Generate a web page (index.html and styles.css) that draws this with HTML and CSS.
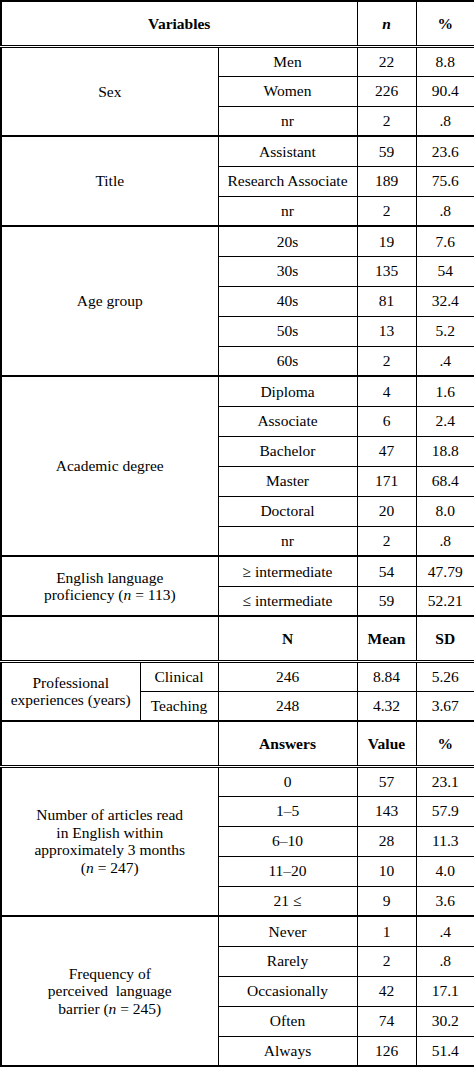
FILE: index.html
```html
<!DOCTYPE html>
<html lang="en">
<head>
<meta charset="utf-8">
<title>Participant characteristics</title>
<link rel="stylesheet" href="styles.css">
</head>
<body>
<table class="stats">
  <colgroup>
    <col class="c-a"><col class="c-b"><col class="c-c"><col class="c-d"><col class="c-e">
  </colgroup>
  <tr class="head">
    <th colspan="3">Variables</th>
    <th><i>n</i></th>
    <th>%</th>
  </tr>

  <tr class="row"><td class="lbl" colspan="2" rowspan="3">Sex</td><td>Men</td><td>22</td><td>8.8</td></tr>
  <tr class="row"><td>Women</td><td>226</td><td>90.4</td></tr>
  <tr class="row grp"><td>nr</td><td>2</td><td>.8</td></tr>

  <tr class="row"><td class="lbl" colspan="2" rowspan="3">Title</td><td>Assistant</td><td>59</td><td>23.6</td></tr>
  <tr class="row"><td>Research Associate</td><td>189</td><td>75.6</td></tr>
  <tr class="row grp"><td>nr</td><td>2</td><td>.8</td></tr>

  <tr class="row"><td class="lbl" colspan="2" rowspan="5">Age group</td><td>20s</td><td>19</td><td>7.6</td></tr>
  <tr class="row"><td>30s</td><td>135</td><td>54</td></tr>
  <tr class="row"><td>40s</td><td>81</td><td>32.4</td></tr>
  <tr class="row"><td>50s</td><td>13</td><td>5.2</td></tr>
  <tr class="row grp"><td>60s</td><td>2</td><td>.4</td></tr>

  <tr class="row"><td class="lbl" colspan="2" rowspan="6">Academic degree</td><td>Diploma</td><td>4</td><td>1.6</td></tr>
  <tr class="row"><td>Associate</td><td>6</td><td>2.4</td></tr>
  <tr class="row"><td>Bachelor</td><td>47</td><td>18.8</td></tr>
  <tr class="row"><td>Master</td><td>171</td><td>68.4</td></tr>
  <tr class="row"><td>Doctoral</td><td>20</td><td>8.0</td></tr>
  <tr class="row grp"><td>nr</td><td>2</td><td>.8</td></tr>

  <tr class="row"><td class="lbl" colspan="2" rowspan="2">English language<br>proficiency (<i>n</i> = 113)</td><td>&ge; intermediate</td><td>54</td><td>47.79</td></tr>
  <tr class="row grp"><td>&le; intermediate</td><td>59</td><td>52.21</td></tr>

  <tr class="head sub">
    <th colspan="2"></th>
    <th>N</th>
    <th>Mean</th>
    <th>SD</th>
  </tr>

  <tr class="row"><td class="lbl" rowspan="2">Professional<br>experiences (years)</td><td>Clinical</td><td>246</td><td>8.84</td><td>5.26</td></tr>
  <tr class="row grp"><td>Teaching</td><td>248</td><td>4.32</td><td>3.67</td></tr>

  <tr class="head sub">
    <th colspan="2"></th>
    <th>Answers</th>
    <th>Value</th>
    <th>%</th>
  </tr>

  <tr class="row"><td class="lbl" colspan="2" rowspan="5">Number of articles read<br>in English within<br>approximately 3 months<br>(<i>n</i> = 247)</td><td>0</td><td>57</td><td>23.1</td></tr>
  <tr class="row"><td>1&ndash;5</td><td>143</td><td>57.9</td></tr>
  <tr class="row"><td>6&ndash;10</td><td>28</td><td>11.3</td></tr>
  <tr class="row"><td>11&ndash;20</td><td>10</td><td>4.0</td></tr>
  <tr class="row grp"><td>21 &le;</td><td>9</td><td>3.6</td></tr>

  <tr class="row"><td class="lbl" colspan="2" rowspan="5">Frequency of<br>perceived&nbsp; language<br>barrier (<i>n</i> = 245)</td><td>Never</td><td>1</td><td>.4</td></tr>
  <tr class="row"><td>Rarely</td><td>2</td><td>.8</td></tr>
  <tr class="row"><td>Occasionally</td><td>42</td><td>17.1</td></tr>
  <tr class="row"><td>Often</td><td>74</td><td>30.2</td></tr>
  <tr class="row"><td>Always</td><td>126</td><td>51.4</td></tr>
</table>
</body>
</html>
```

FILE: styles.css
```css
html, body {
  margin: 0;
  padding: 0;
  background: #fff;
}

.stats {
  width: 474px;
  table-layout: fixed;
  border-collapse: collapse;
  border: 2px solid #000;
  font-family: "Liberation Serif", "Times New Roman", serif;
  font-size: 15.5px;
  line-height: 17.5px;
  color: #000;
}

.c-a { width: 139px; }
.c-b { width: 78px; }
.c-c { width: 139px; }
.c-d { width: 59px; }
.c-e { width: 59px; }

.stats th,
.stats td {
  border: 1px solid #000;
  padding: 0 2px;
  text-align: center;
  vertical-align: middle;
  white-space: nowrap;
}

.stats th {
  font-weight: bold;
}

.head {
  height: 45px;
}

.head th {
  border-bottom: 3px double #000;
}

.sub th {
  border-top: 2px solid #000;
}

.row {
  height: 30px;
}

.grp td {
  border-bottom: 2px solid #000;
}

.stats td.lbl {
  border-bottom: 2px solid #000;
  white-space: normal;
}
```
